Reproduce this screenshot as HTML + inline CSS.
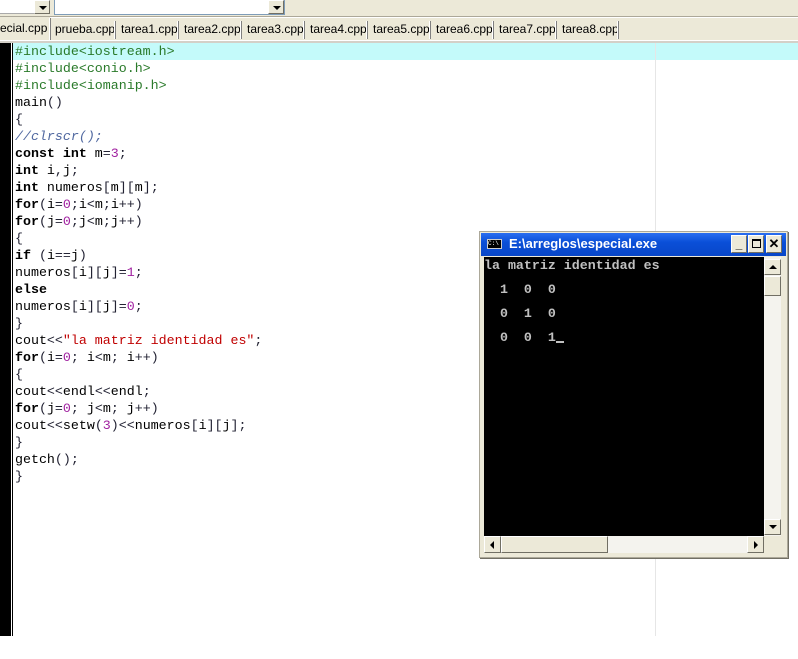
<!DOCTYPE html>
<html><head><meta charset="utf-8"><style>
*{margin:0;padding:0;box-sizing:border-box}
body{width:798px;height:659px;background:#fff;position:relative;overflow:hidden;font-family:"Liberation Sans",sans-serif}
.abs{position:absolute}
.code{position:absolute;left:15px;font-family:"Liberation Mono",monospace;font-size:13.3px;line-height:17px;white-space:pre;color:#000}
.g{color:#2a7a2a}.k{font-weight:bold}.n{color:#a020a0}.s{color:#c00000}.c{color:#5068a0;font-style:italic}.p{color:#223}
.tab{position:absolute;top:20px;font-size:12px;color:#000;height:19px;line-height:19px}
.sep{position:absolute;top:21px;width:2px;height:18px;border-left:1px solid #fff;border-right:1px solid #808080}
.con{font-family:"Liberation Mono",monospace;font-size:13.3px;font-weight:bold;color:#c0c0c0;white-space:pre;position:absolute}
.btn{position:absolute;background:#ece9d8;border:1px solid;border-color:#fff #716f64 #716f64 #fff}
</style></head><body>
<div class="abs" style="left:0;top:0;width:798px;height:17px;background:#ece9d8"></div>
<div class="abs" style="left:0;top:0;width:50px;height:14px;background:#fff;border-bottom:1px solid #aaa"></div>
<div class="btn" style="left:34px;top:0;width:16px;height:14px"><div class="abs" style="left:4px;top:5px;border:4px solid transparent;border-top:4px solid #000;border-bottom:0"></div></div>
<div class="abs" style="left:54px;top:0;width:231px;height:15px;background:#fff;border:1px solid #7f9db9;border-top:0"></div>
<div class="btn" style="left:268px;top:0;width:16px;height:14px"><div class="abs" style="left:4px;top:5px;border:4px solid transparent;border-top:4px solid #000;border-bottom:0"></div></div>
<div class="abs" style="left:0;top:16px;width:798px;height:1px;background:#aca899"></div>
<div class="abs" style="left:0;top:17px;width:798px;height:1px;background:#fff"></div>
<div class="abs" style="left:0;top:18px;width:798px;height:24px;background:#ece9d8"></div>
<div class="abs" style="left:0;top:17px;width:50px;height:25px;background:#ece9d8"></div>
<div class="tab" style="left:0;top:19px">ecial.cpp</div>
<div class="sep" style="left:49px;top:18px;height:22px"></div>
<div class="tab" style="left:55px">prueba.cpp</div><div class="sep" style="left:114px"></div>
<div class="tab" style="left:121px">tarea1.cpp</div><div class="sep" style="left:177px"></div>
<div class="tab" style="left:184px">tarea2.cpp</div><div class="sep" style="left:240px"></div>
<div class="tab" style="left:247px">tarea3.cpp</div><div class="sep" style="left:303px"></div>
<div class="tab" style="left:310px">tarea4.cpp</div><div class="sep" style="left:366px"></div>
<div class="tab" style="left:373px">tarea5.cpp</div><div class="sep" style="left:429px"></div>
<div class="tab" style="left:436px">tarea6.cpp</div><div class="sep" style="left:492px"></div>
<div class="tab" style="left:499px">tarea7.cpp</div><div class="sep" style="left:555px"></div>
<div class="tab" style="left:562px">tarea8.cpp</div><div class="sep" style="left:617px"></div>
<div class="abs" style="left:0;top:40px;width:798px;height:1px;background:#fff"></div>
<div class="abs" style="left:0;top:41px;width:798px;height:2px;background:#d4d0c8"></div>
<div class="abs" style="left:0;top:43px;width:11px;height:593px;background:#000"></div>
<div class="abs" style="left:12px;top:43px;width:1px;height:593px;background:#000"></div>
<div class="abs" style="left:13px;top:43px;width:785px;height:17px;background:#c4fafa"></div>
<div class="abs" style="left:655px;top:43px;width:1px;height:593px;background:#e6e6e6"></div>
<div class="code" style="top:43px"><span class="g">#include&lt;iostream.h&gt;
#include&lt;conio.h&gt;
#include&lt;iomanip.h&gt;</span>
main<span class="p">()</span>
<span class="p">{</span>
<span class="c">//clrscr();</span>
<span class="k">const int</span> m<span class="p">=</span><span class="n">3</span><span class="p">;</span>
<span class="k">int</span> i<span class="p">,</span>j<span class="p">;</span>
<span class="k">int</span> numeros<span class="p">[</span>m<span class="p">][</span>m<span class="p">];</span>
<span class="k">for</span><span class="p">(</span>i<span class="p">=</span><span class="n">0</span><span class="p">;</span>i<span class="p">&lt;</span>m<span class="p">;</span>i<span class="p">++)</span>
<span class="k">for</span><span class="p">(</span>j<span class="p">=</span><span class="n">0</span><span class="p">;</span>j<span class="p">&lt;</span>m<span class="p">;</span>j<span class="p">++)</span>
<span class="p">{</span>
<span class="k">if</span> <span class="p">(</span>i<span class="p">==</span>j<span class="p">)</span>
numeros<span class="p">[</span>i<span class="p">][</span>j<span class="p">]=</span><span class="n">1</span><span class="p">;</span>
<span class="k">else</span>
numeros<span class="p">[</span>i<span class="p">][</span>j<span class="p">]=</span><span class="n">0</span><span class="p">;</span>
<span class="p">}</span>
cout<span class="p">&lt;&lt;</span><span class="s">"la matriz identidad es"</span><span class="p">;</span>
<span class="k">for</span><span class="p">(</span>i<span class="p">=</span><span class="n">0</span><span class="p">;</span> i<span class="p">&lt;</span>m<span class="p">;</span> i<span class="p">++)</span>
<span class="p">{</span>
cout<span class="p">&lt;&lt;</span>endl<span class="p">&lt;&lt;</span>endl<span class="p">;</span>
<span class="k">for</span><span class="p">(</span>j<span class="p">=</span><span class="n">0</span><span class="p">;</span> j<span class="p">&lt;</span>m<span class="p">;</span> j<span class="p">++)</span>
cout<span class="p">&lt;&lt;</span>setw<span class="p">(</span><span class="n">3</span><span class="p">)&lt;&lt;</span>numeros<span class="p">[</span>i<span class="p">][</span>j<span class="p">];</span>
<span class="p">}</span>
getch<span class="p">();</span>
<span class="p">}</span></div>
<div class="abs" style="left:479px;top:231px;width:309px;height:327px;background:#ece9d8;border:1px solid #aca899;box-shadow:1px 1px 0 #716f64"></div>
<div class="abs" style="left:481px;top:233px;width:305px;height:23px;background:linear-gradient(#2a6ef0,#0a4fd8 40%,#0846c8)"></div>
<div class="abs" style="left:487px;top:239px;width:15px;height:10px;background:#000;border:1px solid #ccc;color:#fff;font-size:6px;line-height:8px;font-family:'Liberation Mono',monospace">C:\</div>
<div class="abs" style="left:509px;top:236px;color:#fff;font-size:13px;font-weight:bold;line-height:16px">E:\arreglos\especial.exe</div>
<div class="btn" style="left:731px;top:235px;width:16px;height:18px;font-weight:bold;font-size:12px;text-align:center;line-height:16px">_</div>
<div class="btn" style="left:748px;top:235px;width:16px;height:18px"><div class="abs" style="left:3px;top:3px;width:9px;height:9px;border:1px solid #000;border-top-width:2px"></div></div>
<div class="btn" style="left:766px;top:235px;width:16px;height:18px;font-weight:bold;font-size:13px;text-align:center;line-height:16px">✕</div>
<div class="abs" style="left:484px;top:257px;width:280px;height:279px;background:#000"></div>
<div class="con" style="left:484px;top:258px">la matriz identidad es</div>
<div class="con" style="left:484px;top:282px">  1  0  0</div>
<div class="con" style="left:484px;top:306px">  0  1  0</div>
<div class="con" style="left:484px;top:330px">  0  0  1</div>
<div class="abs" style="left:556px;top:341px;width:8px;height:2px;background:#c0c0c0"></div>
<div class="abs" style="left:764px;top:257px;width:17px;height:279px;background:#f4f3ee"></div>
<div class="btn" style="left:764px;top:259px;width:17px;height:16px"><div class="abs" style="left:4px;top:5px;border:4px solid transparent;border-bottom:4px solid #000;border-top:0"></div></div>
<div class="btn" style="left:764px;top:276px;width:17px;height:20px"></div>
<div class="btn" style="left:764px;top:519px;width:17px;height:16px"><div class="abs" style="left:4px;top:5px;border:4px solid transparent;border-top:4px solid #000;border-bottom:0"></div></div>
<div class="abs" style="left:484px;top:536px;width:280px;height:17px;background:#f4f3ee"></div>
<div class="btn" style="left:484px;top:536px;width:17px;height:17px"><div class="abs" style="left:5px;top:4px;border:4px solid transparent;border-right:4px solid #000;border-left:0"></div></div>
<div class="btn" style="left:501px;top:536px;width:107px;height:17px"></div>
<div class="btn" style="left:747px;top:536px;width:17px;height:17px"><div class="abs" style="left:6px;top:4px;border:4px solid transparent;border-left:4px solid #000;border-right:0"></div></div>
</body></html>
